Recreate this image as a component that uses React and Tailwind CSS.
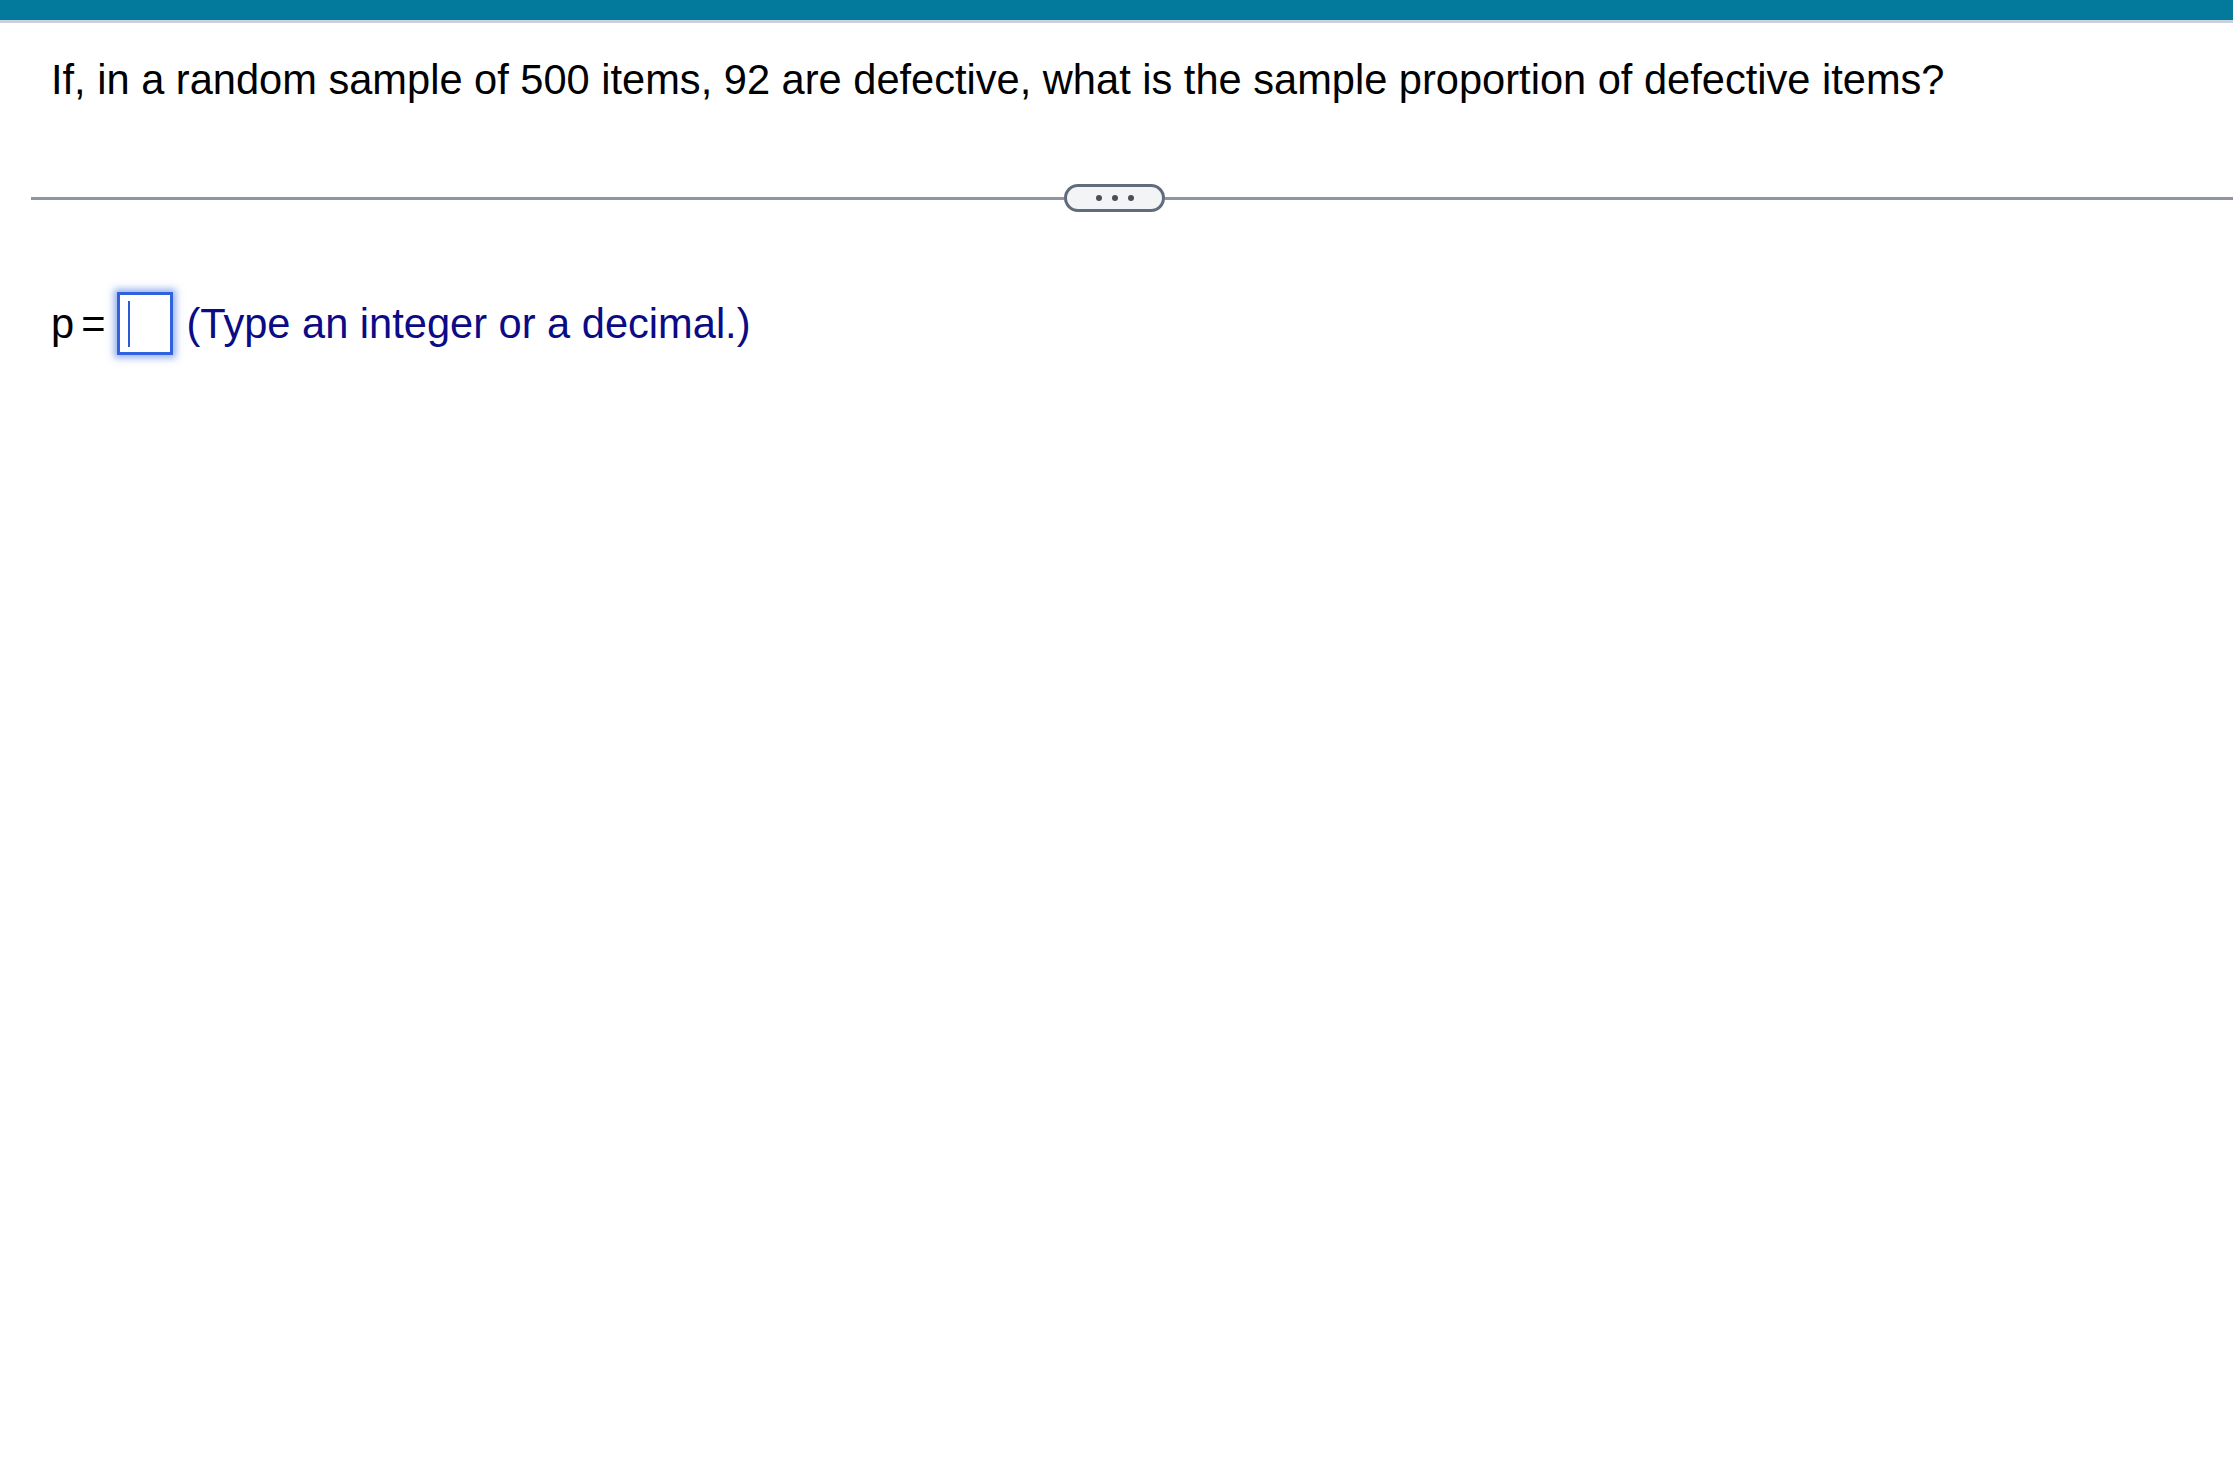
import React from 'react';

const QuestionDivider = () => (
  <div className="flex items-center h-[28px]">
    <div className="ml-[31px] w-[1033px] h-[3px] bg-[#8e96a4]" />
    <div className="flex items-center justify-center gap-[10px] w-[101px] h-[28px] rounded-full border-[3px] border-[#606c7c] bg-[#f3f4f6]">
      <span className="w-[6px] h-[6px] rounded-full bg-[#4b4f57]" />
      <span className="w-[6px] h-[6px] rounded-full bg-[#4b4f57]" />
      <span className="w-[6px] h-[6px] rounded-full bg-[#4b4f57]" />
    </div>
    <div className="flex-1 h-[3px] bg-[#8e96a4]" />
  </div>
);

export default function App() {
  return (
    <div className="min-h-screen bg-white font-['Liberation_Sans',Arial,sans-serif] text-black">
      <div className="h-[20px] bg-[#03799b]" />
      <div className="h-[3px] bg-[#c9d2dd]" />

      <p className="pl-[51px] pt-[33px] text-[41.6px] leading-[48px]">
        If, in a random sample of 500 items, 92 are defective, what is the sample proportion of defective items?
      </p>

      <div className="mt-[80px]">
        <QuestionDivider />
      </div>

      <div className="flex items-center pl-[51px] mt-[80px] text-[41.6px] leading-[48px]">
        <span>p</span>
        <span className="ml-[7px]">=</span>
        <div className="relative ml-[12px] w-[56px] h-[63px] border-[3px] border-[#2f62dc] bg-white shadow-[0_0_7px_3px_rgba(47,98,220,0.5)]">
          <span className="absolute left-[8px] top-[6px] w-[2px] h-[46px] bg-[#2a5bd7]" />
        </div>
        <span className="ml-[13px] text-[#0b0b86]">(Type an integer or a decimal.)</span>
      </div>
    </div>
  );
}
